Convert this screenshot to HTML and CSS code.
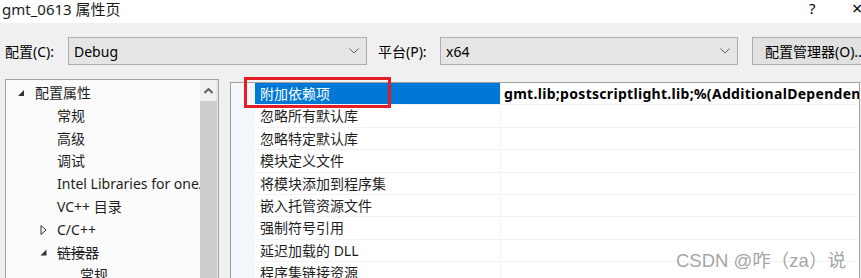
FILE: index.html
```html
<!DOCTYPE html>
<html lang="zh-CN">
<head>
  <meta charset="UTF-8" />
  <title>gmt_0613 属性页</title>
  <link rel="stylesheet" href="styles.css">
</head>
<body>
  <div class="titlebar">
    <span class="title">gmt_0613 属性页</span>
    <span class="help">?</span>
    <span class="close">×</span>
  </div>

  <div class="toolbar">
    <label class="lbl">配置(C):</label>
    <div class="combo combo-config">
      <span>Debug</span>
      <svg class="chev" width="10" height="6" viewBox="0 0 10 6"><path d="M0.5 0.5 L5 5 L9.5 0.5" fill="none" stroke="#606060" stroke-width="1"/></svg>
    </div>
    <label class="lbl lbl-platform">平台(P):</label>
    <div class="combo combo-platform">
      <span>x64</span>
      <svg class="chev" width="10" height="6" viewBox="0 0 10 6"><path d="M0.5 0.5 L5 5 L9.5 0.5" fill="none" stroke="#606060" stroke-width="1"/></svg>
    </div>
    <button class="btn">配置管理器(O)...</button>
  </div>

  <div class="main">
    <div class="tree-panel">
      <ul class="tree">
        <li class="lvl0"><svg class="tri" width="6" height="6" viewBox="0 0 6 6"><polygon points="6,0 6,6 0,6" fill="#333"/></svg>配置属性</li>
        <li class="lvl1">常规</li>
        <li class="lvl1">高级</li>
        <li class="lvl1">调试</li>
        <li class="lvl1">Intel Libraries for oneAPI</li>
        <li class="lvl1">VC++ 目录</li>
        <li class="lvl1 has-tri"><svg class="tri" width="7" height="10" viewBox="0 0 7 10"><polygon points="1,0.5 6,5 1,9.5" fill="none" stroke="#333" stroke-width="1"/></svg>C/C++</li>
        <li class="lvl1 has-tri struck"><svg class="tri" width="7" height="7" viewBox="0 0 7 7"><polygon points="6.5,0.5 6.5,6.5 0.5,6.5" fill="#333"/></svg><span>链接器</span></li>
        <li class="lvl2">常规</li>
      </ul>
      <div class="scrollbar">
        <div class="scroll-up"><svg width="9" height="6" viewBox="0 0 9 6"><path d="M0.5 5 L4.5 1 L8.5 5" fill="none" stroke="#606060" stroke-width="2"/></svg></div>
        <div class="thumb"></div>
      </div>
    </div>

    <div class="grid-panel">
      <div class="gutter"></div>
      <div class="grid">
        <div class="row selected"><div class="name">附加依赖项</div><div class="value">gmt.lib;postscriptlight.lib;%(AdditionalDependencies)</div></div>
        <div class="row"><div class="name">忽略所有默认库</div><div class="value"></div></div>
        <div class="row"><div class="name">忽略特定默认库</div><div class="value"></div></div>
        <div class="row"><div class="name">模块定义文件</div><div class="value"></div></div>
        <div class="row"><div class="name">将模块添加到程序集</div><div class="value"></div></div>
        <div class="row"><div class="name">嵌入托管资源文件</div><div class="value"></div></div>
        <div class="row"><div class="name">强制符号引用</div><div class="value"></div></div>
        <div class="row"><div class="name">延迟加载的 DLL</div><div class="value"></div></div>
        <div class="row"><div class="name">程序集链接资源</div><div class="value"></div></div>
      </div>
    </div>
  </div>

  <div class="highlight"></div>
  <div class="watermark">CSDN @咋（za）说</div>
</body>
</html>
```

FILE: styles.css
```css
* {
  box-sizing: border-box;
}

body {
  margin: 0;
  width: 861px;
  height: 278px;
  overflow: hidden;
  position: relative;
  background-color: #f0f0f0;
  font-family: "Noto Sans", "Noto Sans CJK SC", sans-serif;
  font-size: 14px;
  color: #000;
}

.titlebar {
  height: 23px;
  background: #fff;
  display: flex;
  align-items: flex-start;
  position: relative;
}

.titlebar .title {
  margin-left: 2px;
  margin-top: -2px;
  font-size: 15px;
  color: #1a1a1a;
}

.titlebar .help {
  position: absolute;
  left: 809px;
  top: -2px;
  font-size: 15px;
}

.titlebar .close {
  position: absolute;
  left: 852px;
  top: -4px;
  font-size: 18px;
}

.toolbar {
  margin-top: 14px;
  height: 28px;
  display: flex;
  align-items: center;
}

.toolbar > * {
  flex-shrink: 0;
}

.lbl {
  margin-left: 5px;
  width: 63px;
}

.lbl-platform {
  margin-left: 11px;
  width: 62px;
}

.combo {
  height: 28px;
  background: #e5e5e5;
  border: 1px solid #adadad;
  display: flex;
  align-items: center;
  justify-content: space-between;
  padding: 0 7px 0 5px;
}

.combo-config {
  width: 299px;
}

.combo-platform {
  width: 298px;
}

.btn {
  margin-left: 14px;
  height: 28px;
  width: 120px;
  background: #e1e1e1;
  border: 1px solid #adadad;
  font-family: inherit;
  font-size: 14px;
  text-align: left;
  padding: 0 0 0 12px;
  white-space: nowrap;
  overflow: hidden;
}

.main {
  display: flex;
  align-items: flex-start;
  margin-top: 14px;
}

.tree-panel {
  margin-left: 5px;
  width: 214px;
  height: 220px;
  border: 1px solid #a0a0a0;
  border-bottom: none;
  background: #fff;
  display: flex;
}

.tree {
  flex: 1;
  list-style: none;
  margin: 0;
  padding: 2px 0 0 0;
  overflow: hidden;
  background: #fbfbfb;
}

.tree li {
  height: 22.8px;
  line-height: 22.8px;
  white-space: nowrap;
  display: flex;
  align-items: center;
  color: #1e1e1e;
}

.tree .lvl0 {
  padding-left: 12px;
}

.tree .lvl0 .tri {
  margin-right: 11px;
}

.tree .lvl1 {
  padding-left: 51px;
}

.tree .lvl1.has-tri {
  padding-left: 34px;
}

.tree .has-tri .tri {
  margin-right: 10px;
}

.tree .lvl2 {
  padding-left: 74px;
}

.tree .struck span {
  text-decoration: line-through;
  text-decoration-color: #333;
}

.scrollbar {
  width: 18px;
  background: #f0f0f0;
  border-right: 2px solid #e6e6e6;
  display: flex;
  flex-direction: column;
}

.scroll-up {
  height: 21px;
  display: flex;
  justify-content: center;
  align-items: center;
}

.thumb {
  flex: 1;
  background: #cdcdcd;
  width: 17px;
}

.grid-panel {
  margin-left: 11px;
  margin-top: 3px;
  width: 630px;
  height: 220px;
  border: 1px solid #a0a0a0;
  border-bottom: none;
  background: #fff;
  display: flex;
}

.gutter {
  width: 24px;
  background: #f3f7fc;
}

.grid {
  flex: 1;
  overflow: hidden;
}

.row {
  display: flex;
  height: 22.4px;
  border-bottom: 1px solid #f0f3f8;
}

.row .name {
  width: 246px;
  padding-left: 5px;
  line-height: 21px;
  white-space: nowrap;
  color: #1e1e1e;
  border-right: 1px solid #f0f3f8;
}

.row .value {
  flex: 1;
  padding-left: 3px;
  line-height: 21px;
  white-space: nowrap;
  overflow: hidden;
  font-weight: bold;
  letter-spacing: 0.3px;
}

.row.selected .name {
  background: #0078d7;
  color: #fff;
}

.highlight {
  position: absolute;
  left: 244px;
  top: 77px;
  width: 147px;
  height: 31px;
  border: 3px solid #e41e22;
}

.watermark {
  position: absolute;
  left: 676px;
  top: 246px;
  font-family: "Liberation Sans", "Noto Sans CJK SC", sans-serif;
  font-size: 18.5px;
  color: rgba(140, 140, 140, 0.8);
  text-shadow: 0 0 2px #fff;
}
```
